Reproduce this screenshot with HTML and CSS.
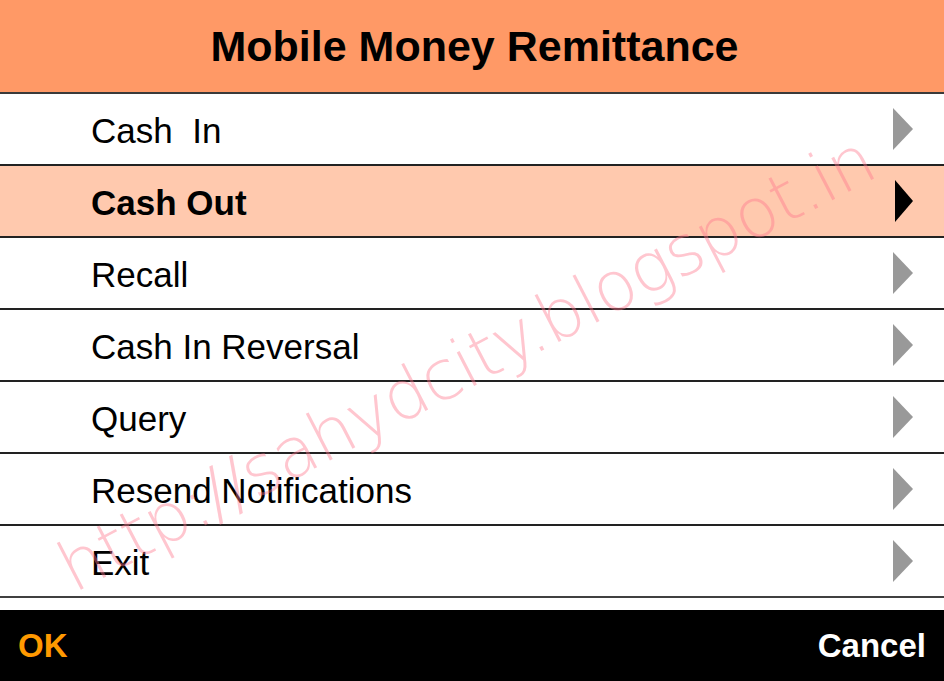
FILE: index.html
```html
<!DOCTYPE html>
<html>
<head>
<meta charset="utf-8">
<title>Mobile Money Remittance</title>
<link rel="stylesheet" href="styles.css">
</head>
<body>
<div class="screen">
  <header class="title-bar">Mobile Money Remittance</header>
  <ul class="menu">
    <li class="item"><span class="label">Cash&nbsp; In</span><span class="arrow"></span></li>
    <li class="item selected"><span class="label">Cash Out</span><span class="arrow"></span></li>
    <li class="item"><span class="label">Recall</span><span class="arrow"></span></li>
    <li class="item"><span class="label">Cash In Reversal</span><span class="arrow"></span></li>
    <li class="item"><span class="label">Query</span><span class="arrow"></span></li>
    <li class="item"><span class="label">Resend Notifications</span><span class="arrow"></span></li>
    <li class="item"><span class="label">Exit</span><span class="arrow"></span></li>
  </ul>
  <footer class="softkeys">
    <span class="ok">OK</span>
    <span class="cancel">Cancel</span>
  </footer>
  <div class="watermark">http://sahydcity.blogspot.in</div>
</div>
</body>
</html>
```

FILE: styles.css
```css
html, body {
  margin: 0;
  padding: 0;
  background: #ffffff;
}

.screen {
  position: relative;
  width: 944px;
  height: 681px;
  overflow: hidden;
  display: flex;
  flex-direction: column;
  font-family: "Liberation Sans", Arial, sans-serif;
  color: #000;
}

.title-bar {
  height: 94px;
  box-sizing: border-box;
  background: #ff9966;
  border-bottom: 2px solid #3a3a3a;
  display: flex;
  align-items: center;
  justify-content: center;
  font-size: 43px;
  font-weight: bold;
  padding-left: 5px;
}

.menu {
  list-style: none;
  margin: 0;
  padding: 0;
}

.item {
  height: 72px;
  box-sizing: border-box;
  border-bottom: 2px solid #222;
  display: flex;
  align-items: center;
  justify-content: space-between;
  padding-left: 91px;
  padding-right: 31px;
  font-size: 35px;
}

.item:last-child {
  border-bottom-color: #404040;
}

.item .label {
  margin-top: 3px;
}

.item.selected {
  background: #ffc9ae;
}

.item.selected .label {
  font-weight: bold;
}

.arrow {
  width: 0;
  height: 0;
  border-top: 21px solid transparent;
  border-bottom: 21px solid transparent;
  border-left: 20px solid #999999;
}

.item.selected .arrow {
  border-left-color: #000;
  border-left-width: 18px;
}

.softkeys {
  margin-top: 12px;
  flex: 1;
  background: #000;
  display: flex;
  align-items: center;
  justify-content: space-between;
  padding: 0 18px 0 18px;
  font-size: 33px;
  font-weight: bold;
}

.ok {
  color: #ff9900;
}

.cancel {
  color: #ffffff;
}

.watermark {
  position: absolute;
  left: 79px;
  top: 534px;
  transform-origin: 0 100%;
  transform: rotate(-27.4deg);
  font-family: "DejaVu Sans", sans-serif;
  font-weight: 200;
  font-size: 69px;
  line-height: 69px;
  letter-spacing: -1px;
  color: rgba(255, 120, 140, 0.42);
  white-space: nowrap;
  pointer-events: none;
}
```
